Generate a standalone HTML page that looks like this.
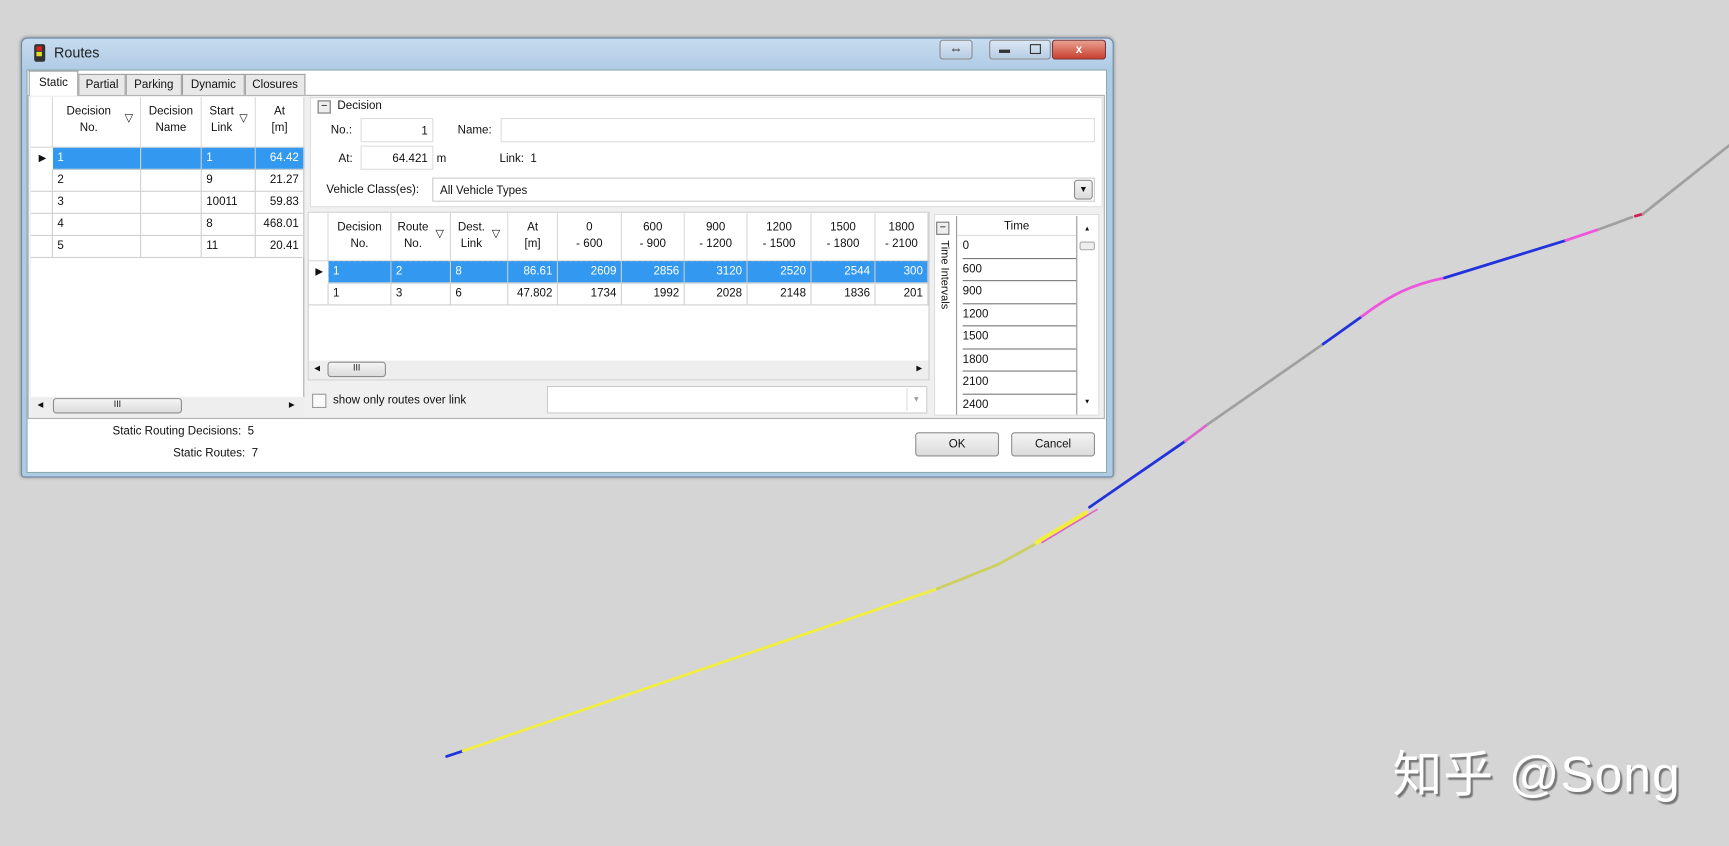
<!DOCTYPE html>
<html><head><meta charset="utf-8"><style>
html,body{margin:0;padding:0;width:1729px;height:846px;overflow:hidden;background:#d5d5d5}
#s{position:absolute;left:0;top:0;width:1568px;height:767px;transform:scale(1.10268);transform-origin:0 0;font-family:"Liberation Sans",sans-serif;font-size:10.5px;color:#111}
.a{position:absolute;box-sizing:border-box}
.c{position:absolute;box-sizing:border-box;border-right:1px solid #d0d0d0;border-bottom:1px solid #d0d0d0;padding:3px 4px;white-space:nowrap;overflow:hidden;height:20px}
.h{position:absolute;box-sizing:border-box;border-right:1px solid #d6d6d6;border-bottom:1px solid #d6d6d6;text-align:center;line-height:15px;padding-top:6px;background:#fff}
.sel{background:#3399f0;color:#fff}
.r{text-align:right}
.f{position:absolute;font-size:10px}
.btn{position:absolute;box-sizing:border-box;border:1px solid #8c8c8c;border-radius:3px;background:linear-gradient(#f4f4f4,#dcdcdc);text-align:center;line-height:20px}
.tab{position:absolute;top:67px;height:19px;box-sizing:border-box;border:1px solid #a0a0a0;border-bottom:none;background:#e8e8e8;text-align:center;line-height:18px;font-size:10.5px}
</style></head><body><div id="s">
<svg class="a" style="left:0;top:0" width="1568" height="767">
<g fill="none" stroke-width="2.5" stroke-linecap="round">
<polyline points="405,686 420,681" stroke="#2233dd"/>
<polyline points="420,681 850,534" stroke="#f2ee40"/>
<polyline points="850,534 905,512 945,490" stroke="#ccd060"/>
<polyline points="940,492 985,465" stroke="#f2ee40" stroke-width="4"/>
<polyline points="945,492 995,462" stroke="#dd66cc" stroke-width="1.5"/>
<polyline points="988,460 1075,400" stroke="#2233dd"/>
<polyline points="1075,400 1095,385" stroke="#dd66cc"/>
<polyline points="1095,385 1200,312" stroke="#a0a0a0"/>
<polyline points="1200,312 1235,287" stroke="#2233dd"/>
<path d="M1235,287 C1260,268 1280,258 1310,252" stroke="#ee55dd"/>
<polyline points="1310,252 1420,218" stroke="#2233dd"/>
<polyline points="1420,218 1450,208" stroke="#ee55dd"/>
<polyline points="1450,208 1480,197" stroke="#a0a0a0"/>
<polyline points="1483,196 1490,194" stroke="#cc2255"/>
<polyline points="1490,194 1568,132" stroke="#a0a0a0"/>
</g></svg>
<div class="a" style="left:1263px;top:666px;font-family:'Liberation Sans','Noto Sans CJK SC',sans-serif;font-size:45px;color:#fff;text-shadow:2px 2px 1px #777;letter-spacing:1px">知乎 @Song</div>

<div class="a" style="left:19px;top:34px;width:991px;height:399px;border:1px solid #6a8aa8;border-radius:6px 6px 3px 3px;background:linear-gradient(#c6dbef,#aecae4 30px,#aecae4);box-shadow:0 0 3px #888"></div>
<div class="a" style="left:31px;top:40px;width:10px;height:16px;background:#333;border-radius:2px"></div>
<div class="a" style="left:33px;top:42px;width:5px;height:4px;background:#d22"></div>
<div class="a" style="left:33px;top:47px;width:5px;height:4px;background:#dd2"></div>
<div class="a" style="left:49px;top:40px;font-size:13px;color:#222">Routes</div>
<div class="btn" style="left:852px;top:36px;width:30px;height:18px;line-height:14px;font-size:12px;background:linear-gradient(#dbe7f4,#b7cde4)">⇔</div>
<div class="btn" style="left:897px;top:36px;width:56px;height:18px;background:linear-gradient(#dbe7f4,#b7cde4)"></div>
<div class="a" style="left:906px;top:45px;width:10px;height:3px;background:#333"></div>
<div class="a" style="left:934px;top:40px;width:10px;height:9px;border:1px solid #333"></div>
<div class="btn" style="left:954px;top:36px;width:49px;height:18px;line-height:16px;background:linear-gradient(#e8a090,#c84030);color:#fff;font-weight:bold;border-color:#803030">x</div>

<div class="a" style="left:24px;top:63px;width:980px;height:366px;background:#fff;border:1px solid #8aa"></div>
<div class="a" style="left:25px;top:86px;width:977px;height:294px;background:#f0f0f0;border:1px solid #b0b0b0"></div>
<div class="tab" style="left:26px;top:64px;height:23px;width:45px;background:#fff;line-height:20px">Static</div>
<div class="tab" style="left:71px;width:43px">Partial</div>
<div class="tab" style="left:114px;width:51px">Parking</div>
<div class="tab" style="left:165px;width:57px">Dynamic</div>
<div class="tab" style="left:222px;width:55px">Closures</div>

<div class="a" style="left:28px;top:88px;width:248px;height:272px;background:#fff;border-right:1px solid #aaa"></div>
<div class="h" style="left:28px;top:88px;width:20px;height:46px"></div>
<div class="h" style="left:48px;top:88px;width:80px;height:46px;padding-right:14px">Decision<br>No.</div>
<div class="f" style="left:113px;top:102px">▽</div>
<div class="h" style="left:128px;top:88px;width:55px;height:46px">Decision<br>Name</div>
<div class="h" style="left:183px;top:88px;width:49px;height:46px;padding-right:12px">Start<br>Link</div>
<div class="f" style="left:217px;top:102px">▽</div>
<div class="h" style="left:232px;top:88px;width:44px;height:46px">At<br>[m]</div>
<div class="a" style="left:35px;top:138px;font-size:9px">▶</div>
<div class="c sel" style="left:48px;top:134px;width:80px">1</div><div class="c sel" style="left:128px;top:134px;width:55px"></div><div class="c sel" style="left:183px;top:134px;width:49px">1</div><div class="c sel r" style="left:232px;top:134px;width:44px">64.42</div>
<div class="c" style="left:28px;top:154px;width:20px"></div><div class="c" style="left:48px;top:154px;width:80px">2</div><div class="c" style="left:128px;top:154px;width:55px"></div><div class="c" style="left:183px;top:154px;width:49px">9</div><div class="c r" style="left:232px;top:154px;width:44px">21.27</div>
<div class="c" style="left:28px;top:174px;width:20px"></div><div class="c" style="left:48px;top:174px;width:80px">3</div><div class="c" style="left:128px;top:174px;width:55px"></div><div class="c" style="left:183px;top:174px;width:49px">10011</div><div class="c r" style="left:232px;top:174px;width:44px">59.83</div>
<div class="c" style="left:28px;top:194px;width:20px"></div><div class="c" style="left:48px;top:194px;width:80px">4</div><div class="c" style="left:128px;top:194px;width:55px"></div><div class="c" style="left:183px;top:194px;width:49px">8</div><div class="c r" style="left:232px;top:194px;width:44px">468.01</div>
<div class="c" style="left:28px;top:214px;width:20px"></div><div class="c" style="left:48px;top:214px;width:80px">5</div><div class="c" style="left:128px;top:214px;width:55px"></div><div class="c" style="left:183px;top:214px;width:49px">11</div><div class="c r" style="left:232px;top:214px;width:44px">20.41</div>
<div class="a" style="left:28px;top:360px;width:248px;height:18px;background:#eee"></div>
<div class="btn" style="left:48px;top:361px;width:117px;height:14px;line-height:10px;font-size:8px">III</div>
<div class="f" style="left:34px;top:363px;font-size:7px">◀</div><div class="f" style="left:262px;top:363px;font-size:7px">▶</div>

<div class="a" style="left:281px;top:88px;width:719px;height:100px;background:#fff;border:1px solid #ddd"></div>
<div class="a" style="left:288px;top:91px;width:12px;height:12px;border:1px solid #777;background:#eee;font-size:10px;line-height:9px;text-align:center">−</div>
<div class="a" style="left:306px;top:90px">Decision</div>
<div class="a" style="left:300px;top:112px">No.:</div>
<div class="a r" style="left:327px;top:107px;width:66px;height:22px;border:1px solid #ddd;padding:5px 4px">1</div>
<div class="a" style="left:415px;top:112px">Name:</div>
<div class="a" style="left:454px;top:107px;width:539px;height:22px;border:1px solid #ddd"></div>
<div class="a" style="left:307px;top:138px">At:</div>
<div class="a r" style="left:327px;top:132px;width:66px;height:22px;border:1px solid #ddd;padding:5px 4px">64.421</div>
<div class="a" style="left:396px;top:138px">m</div>
<div class="a" style="left:453px;top:138px">Link:&nbsp; 1</div>
<div class="a" style="left:296px;top:166px">Vehicle Class(es):</div>
<div class="a" style="left:392px;top:161px;width:601px;height:22px;border:1px solid #ccc;padding:5px 6px">All Vehicle Types</div>
<div class="btn" style="left:974px;top:163px;width:17px;height:18px;line-height:16px;font-size:8px">▼</div>

<div class="a" style="left:279px;top:192px;width:564px;height:153px;background:#fff;border:1px solid #ccc"></div>
<div class="h" style="left:280px;top:193px;width:18px;height:44px"></div>
<div class="h" style="left:298px;top:193px;width:57px;height:44px">Decision<br>No.</div>
<div class="h" style="left:355px;top:193px;width:54px;height:44px;padding-right:14px">Route<br>No.</div><div class="f" style="left:395px;top:207px">▽</div>
<div class="h" style="left:409px;top:193px;width:52px;height:44px;padding-right:14px">Dest.<br>Link</div><div class="f" style="left:446px;top:207px">▽</div>
<div class="h" style="left:461px;top:193px;width:45px;height:44px">At<br>[m]</div>
<div class="h" style="left:506px;top:193px;width:58px;height:44px">0<br>- 600</div>
<div class="h" style="left:564px;top:193px;width:57px;height:44px">600<br>- 900</div>
<div class="h" style="left:621px;top:193px;width:57px;height:44px">900<br>- 1200</div>
<div class="h" style="left:678px;top:193px;width:58px;height:44px">1200<br>- 1500</div>
<div class="h" style="left:736px;top:193px;width:58px;height:44px">1500<br>- 1800</div>
<div class="h" style="left:794px;top:193px;width:48px;height:44px">1800<br>- 2100</div>
<div class="a" style="left:286px;top:241px;font-size:9px">▶</div>
<div class="a sel" style="left:298px;top:237px;width:544px;height:20px;border:1px dashed #225"></div>
<div class="c sel" style="left:298px;top:237px;width:57px">1</div><div class="c sel" style="left:355px;top:237px;width:54px">2</div><div class="c sel" style="left:409px;top:237px;width:52px">8</div><div class="c sel r" style="left:461px;top:237px;width:45px">86.61</div><div class="c sel r" style="left:506px;top:237px;width:58px">2609</div><div class="c sel r" style="left:564px;top:237px;width:57px">2856</div><div class="c sel r" style="left:621px;top:237px;width:57px">3120</div><div class="c sel r" style="left:678px;top:237px;width:58px">2520</div><div class="c sel r" style="left:736px;top:237px;width:58px">2544</div><div class="c sel r" style="left:794px;top:237px;width:48px">300</div>
<div class="c" style="left:280px;top:257px;width:18px"></div><div class="c" style="left:298px;top:257px;width:57px">1</div><div class="c" style="left:355px;top:257px;width:54px">3</div><div class="c" style="left:409px;top:257px;width:52px">6</div><div class="c r" style="left:461px;top:257px;width:45px">47.802</div><div class="c r" style="left:506px;top:257px;width:58px">1734</div><div class="c r" style="left:564px;top:257px;width:57px">1992</div><div class="c r" style="left:621px;top:257px;width:57px">2028</div><div class="c r" style="left:678px;top:257px;width:58px">2148</div><div class="c r" style="left:736px;top:257px;width:58px">1836</div><div class="c r" style="left:794px;top:257px;width:48px">201</div>
<div class="a" style="left:280px;top:327px;width:562px;height:17px;background:#eee"></div>
<div class="btn" style="left:297px;top:328px;width:53px;height:14px;line-height:10px;font-size:8px">III</div>
<div class="f" style="left:285px;top:330px;font-size:7px">◀</div><div class="f" style="left:831px;top:330px;font-size:7px">▶</div>

<div class="a" style="left:283px;top:357px;width:13px;height:13px;border:1px solid #999;background:#fafafa"></div>
<div class="a" style="left:302px;top:357px">show only routes over link</div>
<div class="a" style="left:496px;top:350px;width:345px;height:25px;border:1px solid #ccc;background:#fff"></div>
<div class="a" style="left:822px;top:352px;width:17px;height:21px;border-left:1px solid #ddd;font-size:7px;color:#999;text-align:center;line-height:21px">▼</div>

<div class="a" style="left:847px;top:194px;width:150px;height:183px;background:#fff;border:1px solid #ddd"></div>
<div class="a" style="left:849px;top:201px;width:12px;height:12px;border:1px solid #777;background:#eee;font-size:10px;line-height:9px;text-align:center">−</div>
<div class="a" style="left:862px;top:218px;font-size:10px;transform:rotate(90deg);transform-origin:0 0;white-space:nowrap">Time Intervals</div>
<div class="a" style="left:867px;top:196px;width:110px;height:180px;border-left:1px solid #999;border-right:1px solid #999"></div>
<div class="a" style="left:868px;top:196px;width:108px;height:18px;text-align:center;line-height:18px;border-bottom:1px solid #ddd">Time</div>
<div class="a" style="left:868px;top:214px;width:108px;line-height:19.5px;padding-left:5px">
<div style="border-bottom:1px solid #777">0</div><div style="border-bottom:1px solid #777">600</div><div style="border-bottom:1px solid #777">900</div><div style="border-bottom:1px solid #777">1200</div><div style="border-bottom:1px solid #777">1500</div><div style="border-bottom:1px solid #777">1800</div><div style="border-bottom:1px solid #777">2100</div><div>2400</div></div>
<div class="f" style="left:983px;top:205px;font-size:6px">▲</div>
<div class="a" style="left:979px;top:219px;width:14px;height:8px;border:1px solid #aaa;border-radius:2px;background:#eee"></div>
<div class="f" style="left:983px;top:362px;font-size:6px">▼</div>

<div class="a" style="left:102px;top:385px">Static Routing Decisions:&nbsp; 5</div>
<div class="a" style="left:157px;top:405px">Static Routes:&nbsp; 7</div>
<div class="btn" style="left:830px;top:392px;width:76px;height:22px">OK</div>
<div class="btn" style="left:917px;top:392px;width:76px;height:22px">Cancel</div>
</div></body></html>
